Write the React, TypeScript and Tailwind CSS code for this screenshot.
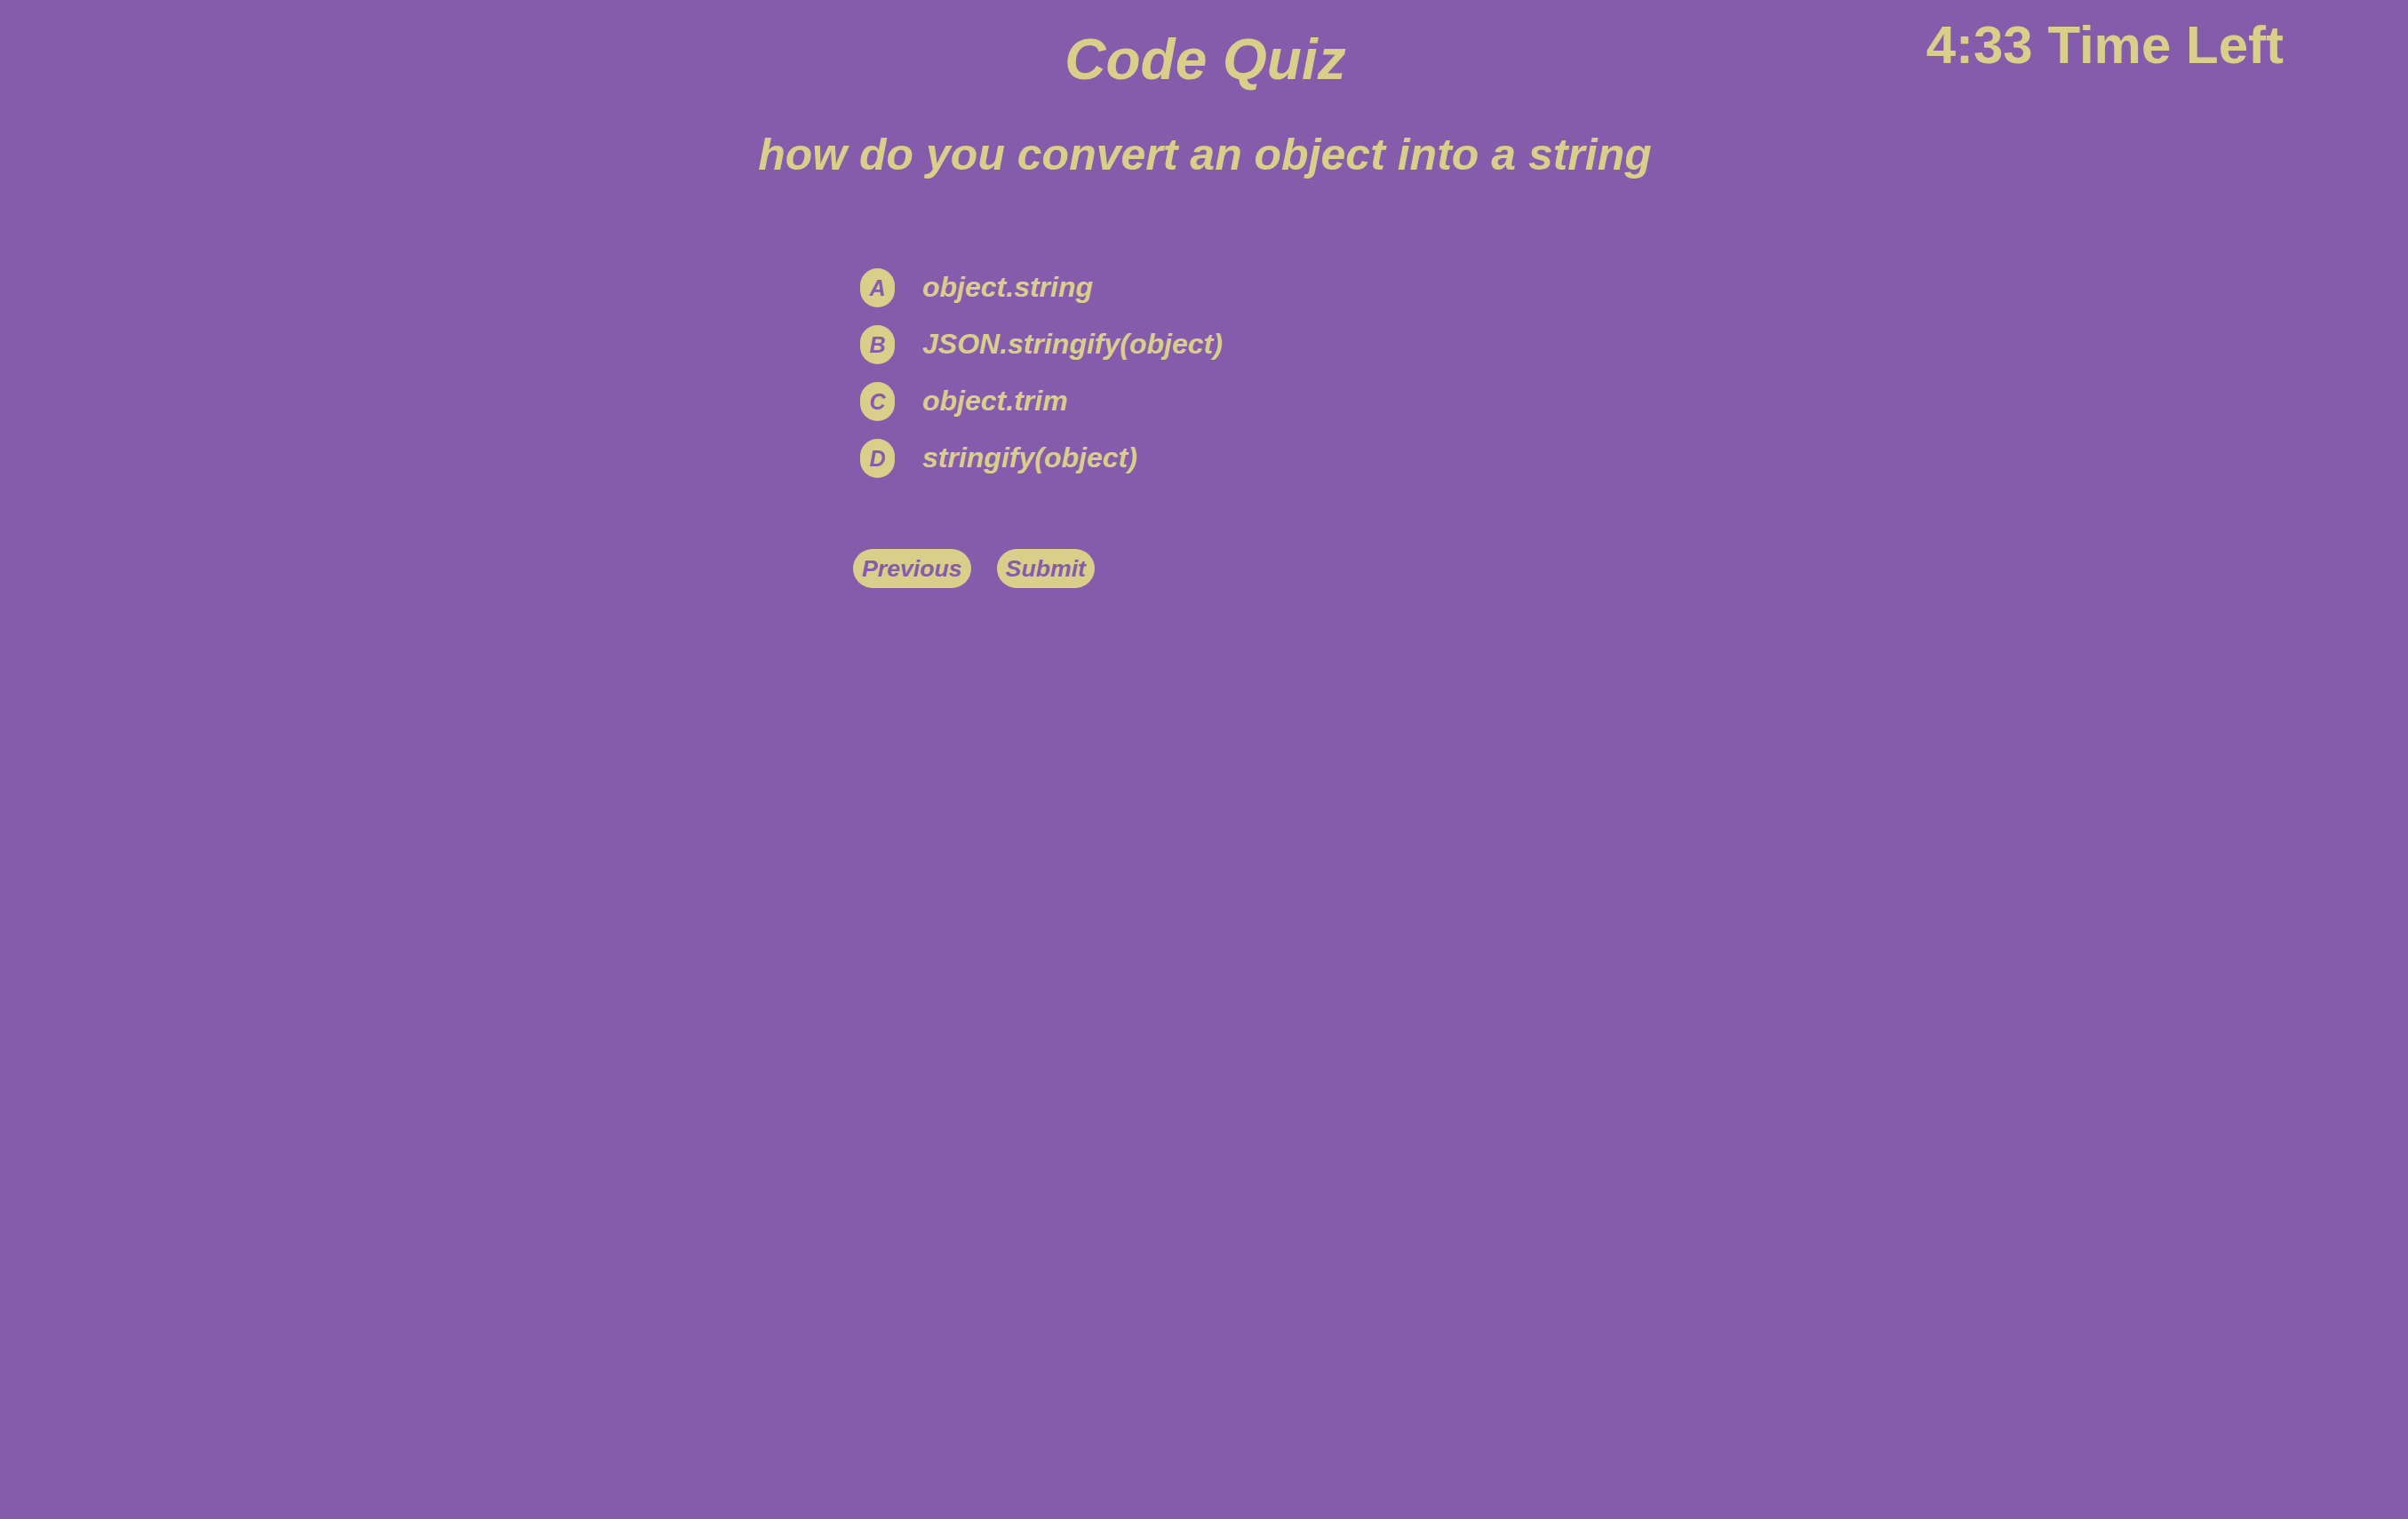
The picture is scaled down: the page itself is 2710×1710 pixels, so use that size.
import React from "react";

const choices = [
  { key: "A", text: "object.string" },
  { key: "B", text: "JSON.stringify(object)" },
  { key: "C", text: "object.trim" },
  { key: "D", text: "stringify(object)" },
];

export default function App() {
  return (
    <div className="min-h-screen bg-[#855cab] text-[#d9cf8b] font-['Liberation_Sans',Arial,sans-serif] font-bold">
      {/* header: title centered, timer on the right */}
      <header className="grid grid-cols-[1fr_auto_1fr] items-start">
        <div />
        <h1 className="mt-[35px] ml-[3px] text-[64px] leading-[64px] italic">Code Quiz</h1>
        <div className="flex justify-end pr-[140px]">
          <span className="mt-[21px] text-[60px] leading-[60px]">4:33 Time Left</span>
        </div>
      </header>

      <h2 className="mt-[50px] pl-[2px] text-center text-[50px] leading-[50px] italic">
        how do you convert an object into a string
      </h2>

      <main className="mx-auto w-[790px]">
        <ul className="mt-[103px] ml-[8px] flex flex-col gap-[20px]">
          {choices.map((c) => (
            <li key={c.key} className="flex items-center gap-[31px]">
              <span className="flex h-[44px] w-[39px] items-center justify-center rounded-full bg-[#d9cf8b] text-[25px] leading-none italic text-[#855cab]">
                {c.key}
              </span>
              <span className="mb-[2px] text-[32px] leading-[32px] italic">{c.text}</span>
            </li>
          ))}
        </ul>

        <div className="mt-[80px] flex gap-[29px]">
          <button className="rounded-full bg-[#d9cf8b] px-[10px] py-[7px] text-[26.67px] leading-[30px] italic text-[#855cab]">
            Previous
          </button>
          <button className="rounded-full bg-[#d9cf8b] px-[10px] py-[7px] text-[26.67px] leading-[30px] italic text-[#855cab]">
            Submit
          </button>
        </div>
      </main>
    </div>
  );
}
